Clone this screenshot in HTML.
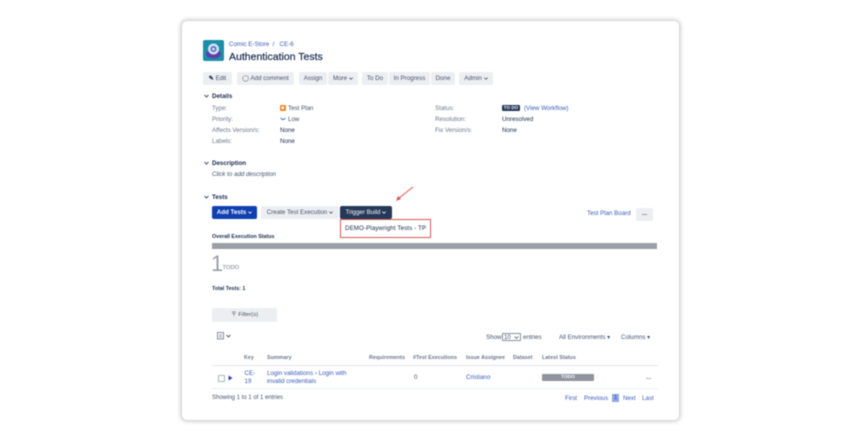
<!DOCTYPE html>
<html><head><meta charset="utf-8"><style>
html,body{margin:0;padding:0;width:860px;height:442px;overflow:hidden;background:#fff}
body{font-family:"Liberation Sans",sans-serif;position:relative}
#f{position:absolute;left:0;top:0;width:860px;height:442px;filter:blur(.4px)}
.card{position:absolute;left:182px;top:21px;width:497px;height:399px;background:#fff;border-radius:5px;box-shadow:0 0 5px 1px rgba(0,0,0,.26)}
.t{position:absolute;white-space:nowrap;font-size:6.2px;line-height:8px;color:#42526e;margin-top:.8px}
.d{color:#172b4d}.l{color:#3b5cb8}.g{color:#6b778c}.b{font-weight:bold}
.btn{position:absolute;background:#edeef1;border-radius:2px;height:13px;font-size:6.2px;line-height:14px;color:#42526e;text-align:center;white-space:nowrap}
.box{position:absolute}
.c{display:inline-block;width:4px;height:3px;margin-left:2px;vertical-align:0}
</style></head><body><div id="f">
<div class="card"></div>

<svg class="box" style="left:203px;top:40px" width="21" height="21" viewBox="0 0 21 21"><rect width="21" height="21" rx="2" fill="#1a8fa8"/><ellipse cx="10.5" cy="14" rx="7.5" ry="4.5" fill="#5e3fa8"/><circle cx="10.5" cy="9" r="5.5" fill="#cfe3f2"/><circle cx="10.5" cy="9" r="3" fill="#5a6fc0"/><circle cx="10.5" cy="9" r="1.3" fill="#e8f0fa"/></svg>
<div class="t l" style="left:229px;top:40px">Comic E-Store&nbsp; /&nbsp; &nbsp;CE-6</div>
<div class="t d" style="left:229px;top:50px;font-size:10.500px;line-height:13px;-webkit-text-stroke:.2px #172b4d">Authentication Tests</div>

<div class="btn" style="left:203px;top:72px;width:29px"><b style="color:#172b4d">✎</b> Edit</div>
<div class="btn" style="left:237px;top:72px;width:57px">◯ Add comment</div>
<div class="btn" style="left:299px;top:72px;width:28px">Assign</div>
<div class="btn" style="left:328px;top:72px;width:30px">More<svg class="c" viewBox="0 0 4 3"><path d="M.3.600L2 2.300 3.700.600" fill="none" stroke="#42526e" stroke-width=".8"/></svg></div>
<div class="btn" style="left:362px;top:72px;width:26px">To Do</div>
<div class="btn" style="left:389px;top:72px;width:41px">In Progress</div>
<div class="btn" style="left:431px;top:72px;width:24px">Done</div>
<div class="btn" style="left:459px;top:72px;width:34px">Admin<svg class="c" viewBox="0 0 4 3"><path d="M.3.600L2 2.300 3.700.600" fill="none" stroke="#42526e" stroke-width=".8"/></svg></div>

<svg class="box" style="left:204px;top:94px" width="5" height="4"><path d="M.5 1l2 2 2-2" fill="none" stroke="#42526e" stroke-width="1"/></svg>
<div class="t d b" style="left:212px;top:92px">Details</div>
<div class="t g" style="left:212px;top:104px">Type:</div>
<svg class="box" style="left:280px;top:105px" width="6" height="6"><rect width="6" height="6" rx="1" fill="#e8872a"/><rect x="1.5" y="1.5" width="2.5" height="2.5" fill="#fff"/></svg>
<div class="t" style="left:288px;top:104px">Test Plan</div>
<div class="t g" style="left:212px;top:115px">Priority:</div>
<svg class="box" style="left:280px;top:117px" width="6" height="4"><path d="M.5 1l2.5 1.8L5.500 1" fill="none" stroke="#2f6fd8" stroke-width="1"/></svg>
<div class="t" style="left:288px;top:115px">Low</div>
<div class="t g" style="left:212px;top:126px">Affects Version/s:</div>
<div class="t d" style="left:280px;top:126px">None</div>
<div class="t g" style="left:212px;top:137px">Labels:</div>
<div class="t d" style="left:280px;top:137px">None</div>

<div class="t g" style="left:435px;top:104px">Status:</div>
<div class="box" style="left:502px;top:105px;width:18px;height:6px;background:#253858;border-radius:1px;color:#fff;font-size:4.600px;line-height:6.500px;font-weight:bold;text-align:center;white-space:nowrap">TO DO</div>
<div class="t l" style="left:524px;top:104px">(View Workflow)</div>
<div class="t g" style="left:435px;top:115px">Resolution:</div>
<div class="t d" style="left:502px;top:115px">Unresolved</div>
<div class="t g" style="left:435px;top:126px">Fix Version/s:</div>
<div class="t d" style="left:502px;top:126px">None</div>

<svg class="box" style="left:204px;top:161px" width="5" height="4"><path d="M.5 1l2 2 2-2" fill="none" stroke="#42526e" stroke-width="1"/></svg>
<div class="t d b" style="left:212px;top:159px">Description</div>
<div class="t" style="left:212px;top:170px;font-style:italic">Click to add description</div>

<svg class="box" style="left:204px;top:195px" width="5" height="4"><path d="M.5 1l2 2 2-2" fill="none" stroke="#42526e" stroke-width="1"/></svg>
<div class="t d b" style="left:212px;top:193px">Tests</div>

<div class="btn" style="left:212px;top:206px;width:45px;background:#0f3fb0;color:#fff;font-weight:bold">Add Tests<svg class="c" viewBox="0 0 4 3"><path d="M.3.600L2 2.300 3.700.600" fill="none" stroke="#fff" stroke-width=".8"/></svg></div>
<div class="btn" style="left:261px;top:206px;width:78px">Create Test Execution<svg class="c" viewBox="0 0 4 3"><path d="M.3.600L2 2.300 3.700.600" fill="none" stroke="#42526e" stroke-width=".8"/></svg></div>
<div class="btn" style="left:340px;top:206px;width:52px;background:#253858;color:#fff">Trigger Build<svg class="c" viewBox="0 0 4 3"><path d="M.3.600L2 2.300 3.700.600" fill="none" stroke="#fff" stroke-width=".8"/></svg></div>
<div class="box" style="left:340px;top:219px;width:89px;height:17px;border:1px solid #d4574e;background:#fff"></div>
<div class="t d" style="left:345px;top:224px;letter-spacing:.1px">DEMO-Playwright Tests - TP</div>
<svg class="box" style="left:392px;top:185px" width="24" height="20"><path d="M21 2L7 13" stroke="#e0544a" stroke-width="1" fill="none"/><path d="M4 16l2-5 3 3z" fill="#e0544a"/></svg>

<div class="t l" style="left:587px;top:209.500px">Test Plan Board</div>
<div class="btn" style="left:636px;top:208px;width:17px;height:13px;line-height:11px;color:#42526e;font-weight:bold">...</div>

<div class="t d b" style="left:212px;top:232px;font-size:5.300px">Overall Execution Status</div>
<div class="box" style="left:212px;top:243px;width:445px;height:6px;background:#9a9fa8"></div>
<div class="t g" style="left:211px;top:252px;font-size:22px;line-height:22px;color:#9aa0a8">1</div>
<div class="t g" style="left:222.500px;top:263px;font-size:5.800px">TODO</div>
<div class="t d b" style="left:212px;top:284px;font-size:5.300px">Total Tests: 1</div>

<div class="btn" style="left:212px;top:308px;width:65px;height:14px;line-height:15px;font-size:5.800px">〒 Filter(s)</div>

<svg class="box" style="left:217px;top:332px" width="14" height="8"><rect x=".5" y=".5" width="6" height="6.500" fill="none" stroke="#8a919c"/><path d="M2 3h3M2 5h3" stroke="#6b778c" stroke-width=".7"/><path d="M9.500 3l2 2 2-2" fill="none" stroke="#42526e" stroke-width=".9"/></svg>

<div class="t" style="left:486px;top:333px">Show</div>
<div class="box" style="left:502px;top:333px;width:19px;height:8px;box-sizing:border-box;border:.7px solid #8a8f98;border-radius:1px"></div>
<div class="t" style="left:504px;top:333px;font-size:6px">10</div>
<svg class="box" style="left:514px;top:336px" width="5" height="3"><path d="M.5.500L2.500 2.300 4.500.500" fill="none" stroke="#42526e" stroke-width=".8"/></svg>
<div class="t" style="left:523px;top:333px">entries</div>
<div class="t" style="left:559px;top:333px">All Environments ▾</div>
<div class="t" style="left:621px;top:333px">Columns ▾</div>

<div class="t g b" style="left:244px;top:353px;font-size:5.400px">Key</div>
<div class="t g b" style="left:267px;top:353px;font-size:5.400px">Summary</div>
<div class="t g b" style="left:369px;top:353px;font-size:5.400px">Requirements</div>
<div class="t g b" style="left:413px;top:353px;font-size:5.400px">#Test Executions</div>
<div class="t g b" style="left:466px;top:353px;font-size:5.400px">Issue Assignee</div>
<div class="t g b" style="left:513px;top:353px;font-size:5.400px">Dataset</div>
<div class="t g b" style="left:542px;top:353px;font-size:5.400px">Latest Status</div>
<div class="box" style="left:212px;top:365px;width:446px;height:1px;background:#e4e6ea"></div>

<div class="box" style="left:218px;top:375px;width:5px;height:5px;border:.6px solid #aab0b8;border-radius:1px"></div>
<svg class="box" style="left:228px;top:375px" width="5" height="6"><path d="M.5.500L4.500 3 .5 5.500z" fill="#3a3fb0"/></svg>
<div class="t l" style="left:244.500px;top:369px">CE-</div>
<div class="t l" style="left:244.500px;top:377px">19</div>
<div class="t l" style="left:267px;top:369px">Login validations › Login with</div>
<div class="t l" style="left:267px;top:377px">invalid credentials</div>
<div class="t" style="left:414px;top:373px">0</div>
<div class="t l" style="left:466px;top:373px">Cristiano</div>
<div class="box" style="left:542px;top:374px;width:52px;height:7px;background:#8f949c;border-radius:1px;color:#fff;font-size:4.800px;line-height:7.500px;text-align:center;font-weight:bold">TODO</div>
<div class="t g b" style="left:646px;top:373px">...</div>
<div class="box" style="left:212px;top:388px;width:446px;height:1px;background:#eceef0"></div>

<div class="t" style="left:212px;top:393px;font-size:6px">Showing 1 to 1 of 1 entries</div>
<div class="t l" style="left:565px;top:394px">First</div>
<div class="t l" style="left:584px;top:394px">Previous</div>
<div class="box" style="left:612px;top:394px;width:7px;height:8px;background:#8fa8e8;color:#2f4fb0;font-size:6px;line-height:8.500px;text-align:center">1</div>
<div class="t l" style="left:623px;top:394px">Next</div>
<div class="t l" style="left:642px;top:394px">Last</div>
</div></body></html>
